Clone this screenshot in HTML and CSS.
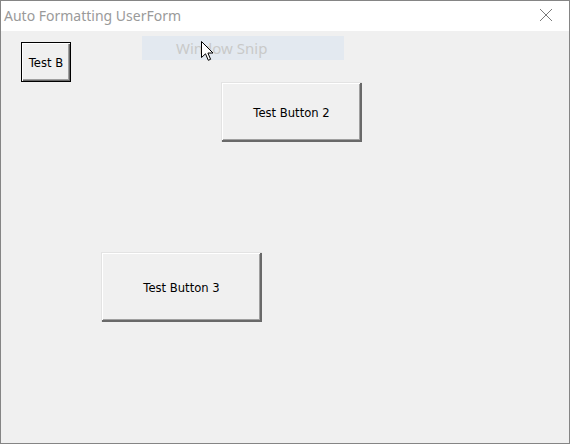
FILE: index.html
```html
<!DOCTYPE html>
<html lang="en">
<head>
    <meta charset="UTF-8">
    <title>Auto Formatting UserForm</title>
    <link rel="stylesheet" href="styles.css">
</head>
<body>
    <div class="window">
        <div class="titlebar">
            <span class="title">Auto Formatting UserForm</span>
            <svg class="close" width="14" height="14" viewBox="0 0 14 14">
                <path d="M1 1 L13 13 M13 1 L1 13" stroke="#7a7a7a" stroke-width="1" fill="none"/>
            </svg>
        </div>
        <div class="client">
            <!-- controls sit on the form canvas at their design coordinates -->
            <div class="snip">Window Snip</div>
            <button class="ctl focused btn-b">Test B</button>
            <button class="ctl btn-2">Test Button 2</button>
            <button class="ctl btn-3">Test Button 3</button>
            <svg class="cursor" width="13" height="21" viewBox="0 0 13 21">
                <path d="M0.5 0.5 L0.5 16.5 L4.5 12.8 L7.3 19.3 L9.6 18.3 L6.9 12 L12 12 Z" fill="#fff" stroke="#000" stroke-width="1" stroke-linejoin="miter"/>
            </svg>
        </div>
    </div>
</body>
</html>
```

FILE: styles.css
```css
body {
    margin: 0;
    background: #f0f0f0;
}

.window {
    width: 570px;
    height: 444px;
    box-sizing: border-box;
    border: 1px solid #858585;
    display: flex;
    flex-direction: column;
    background: #f0f0f0;
}

.titlebar {
    height: 30px;
    background: #fff;
    display: flex;
    align-items: center;
    justify-content: space-between;
    padding: 0 16px 0 3px;
    flex-shrink: 0;
}

.title {
    font-family: "Noto Sans", sans-serif;
    font-size: 14px;
    color: #9a9a9a;
    position: relative;
    top: -1px;
}

.close {
    position: relative;
    top: -1px;
}

.client {
    position: relative;
    flex: 1;
}

/* MSForms style command button */
.ctl {
    position: absolute;
    margin: 0;
    padding: 2px 0 0;
    box-sizing: border-box;
    background: #f0f0f0;
    border: none;
    font-family: "DejaVu Sans", sans-serif;
    font-size: 11.6px;
    color: #000;
    box-shadow:
        inset 1px 1px 0 #e3e3e3,
        inset -2px -2px 0 #696969,
        inset 2px 2px 0 #fff,
        inset -3px -3px 0 #a0a0a0;
}

.ctl.focused {
    border: 1px solid #000;
    box-shadow:
        inset 1px 1px 0 #fff,
        inset -1px -1px 0 #696969,
        inset -2px -2px 0 #a0a0a0;
}

.btn-b { left: 20px; top: 11px; width: 50px; height: 40px; }
.btn-2 { left: 220px; top: 51px; width: 141px; height: 60px; }
.btn-3 { left: 100px; top: 221px; width: 161px; height: 70px; }

.snip {
    position: absolute;
    left: 141px;
    top: 5px;
    width: 202px;
    height: 24px;
    background: #e3e9f0;
    color: #c9c9c9;
    font-family: "Noto Sans", sans-serif;
    font-size: 15px;
    line-height: 24px;
    box-sizing: border-box;
    padding-left: 34px;
}

.cursor {
    position: absolute;
    left: 200px;
    top: 10px;
}
```
